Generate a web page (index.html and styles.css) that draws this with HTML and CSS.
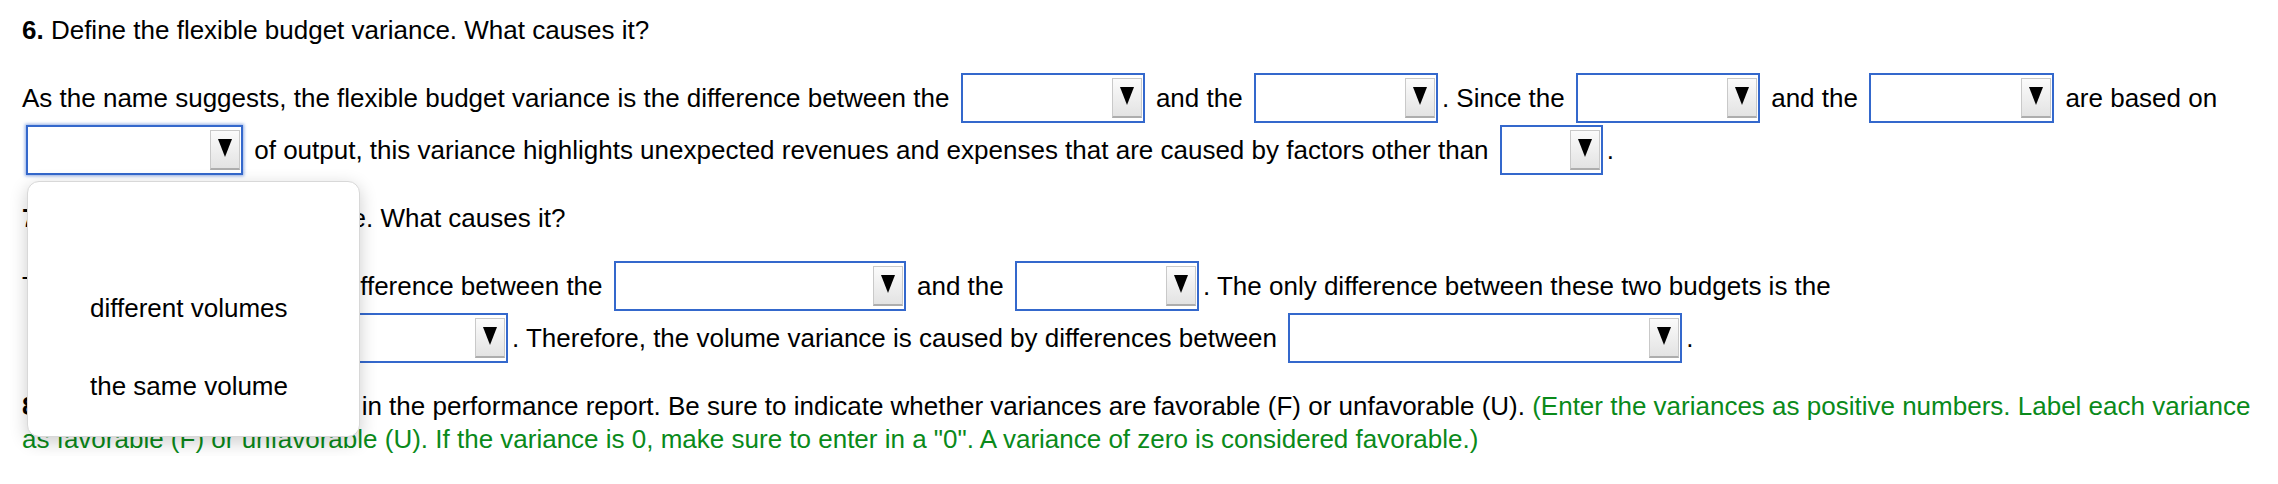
FILE: index.html
```html
<!DOCTYPE html>
<html>
<head>
<meta charset="utf-8">
<link rel="stylesheet" href="styles.css">
</head>
<body>
<div class="page">
  <div class="q"><b>6.</b> Define the flexible budget variance. What causes it?</div>
  <div class="p">As the name suggests, the flexible budget variance is the difference between the <span class="dd w184"><span class="dd-in"><span class="btn"><span class="tri"></span></span></span></span> and the <span class="dd w184"><span class="dd-in"><span class="btn"><span class="tri"></span></span></span></span>. Since the <span class="dd w184"><span class="dd-in"><span class="btn"><span class="tri"></span></span></span></span> and the <span class="dd w185"><span class="dd-in"><span class="btn"><span class="tri"></span></span></span></span> are based on <span class="dd w217 focus"><span class="dd-in"><span class="btn"><span class="tri"></span></span></span></span> of output, this variance highlights unexpected revenues and expenses that are caused by factors other than <span class="dd w103"><span class="dd-in"><span class="btn"><span class="tri"></span></span></span></span>.</div>
  <div class="q"><b>7.</b> Define the volume variance. What causes it?</div>
  <div class="p">The volume variance is the difference between the <span class="dd w292"><span class="dd-in"><span class="btn"><span class="tri"></span></span></span></span> and the <span class="dd w184"><span class="dd-in"><span class="btn"><span class="tri"></span></span></span></span>. The only difference between these two budgets is the <span class="dd w478 under"><span class="dd-in"><span class="btn"><span class="tri"></span></span></span></span>. Therefore, the volume variance is caused by differences between <span class="dd w394"><span class="dd-in"><span class="btn"><span class="tri"></span></span></span></span>.</div>
  <div class="t"><b>8.</b> Calculate all the variances in the performance report. Be sure to indicate whether variances are favorable (F) or unfavorable (U). <span class="hint">(Enter the variances as positive numbers. Label each variance as favorable (F) or unfavorable (U). If the variance is 0, make sure to enter in a "0". A variance of zero is considered favorable.)</span></div>

  <div class="menu">
    <div class="opt"></div>
    <div class="opt">different volumes</div>
    <div class="opt">the same volume</div>
  </div>
</div>
</body>
</html>
```
FILE: styles.css
```css
html, body {
  margin: 0;
  padding: 0;
  background: #fff;
}

body {
  font-family: "Liberation Sans", Arial, Helvetica, sans-serif;
  font-size: 26px;
  color: #000;
}

.page {
  position: relative;
  padding: 13.5px 8px 0 22px;
  line-height: 33px;
}

.q {
  margin: 0;
}

.p, .t {
  margin: 25.5px 0 0;
}

.p + .q {
  margin-top: 25.5px;
}

.hint {
  color: #0a8a1a;
}

.dd {
  display: inline-block;
  box-sizing: border-box;
  height: 50px;
  margin: 1px 4px;
  border: 2px solid #3468cc;
  background: #fff;
  vertical-align: -17px;
  overflow: hidden;
}

.dd.under {
  margin-left: 8px;
}

.dd.focus {
  box-shadow: 0 0 3px 1px rgba(52, 104, 204, 0.55);
}

.dd-in {
  display: flex;
  height: 100%;
  justify-content: flex-end;
  align-items: flex-start;
  padding: 3px 1px 0 0;
  box-sizing: border-box;
}

.btn {
  display: flex;
  justify-content: center;
  box-sizing: border-box;
  width: 30px;
  height: 40px;
  padding-top: 8px;
  border: 1px solid #c9c9c9;
  border-bottom: 2px solid #adadad;
  background: linear-gradient(#fbfbfb, #e3e3e3);
}

.tri {
  width: 0;
  height: 0;
  border-left: 7px solid transparent;
  border-right: 7px solid transparent;
  border-top: 18px solid #000;
}

.w103 { width: 103px; }
.w184 { width: 184px; }
.w185 { width: 185px; }
.w217 { width: 217px; }
.w292 { width: 292px; }
.w394 { width: 394px; }
.w478 { width: 478px; }

.menu {
  position: absolute;
  left: 27px;
  top: 181px;
  width: 333px;
  height: 256px;
  box-sizing: border-box;
  padding-top: 9px;
  border: 1px solid #d8d8d8;
  border-radius: 12px;
  background: #fff;
  box-shadow: 0 5px 18px rgba(0, 0, 0, 0.2);
}

.opt {
  height: 78px;
  line-height: 78px;
  padding-left: 62px;
  white-space: nowrap;
}
```
